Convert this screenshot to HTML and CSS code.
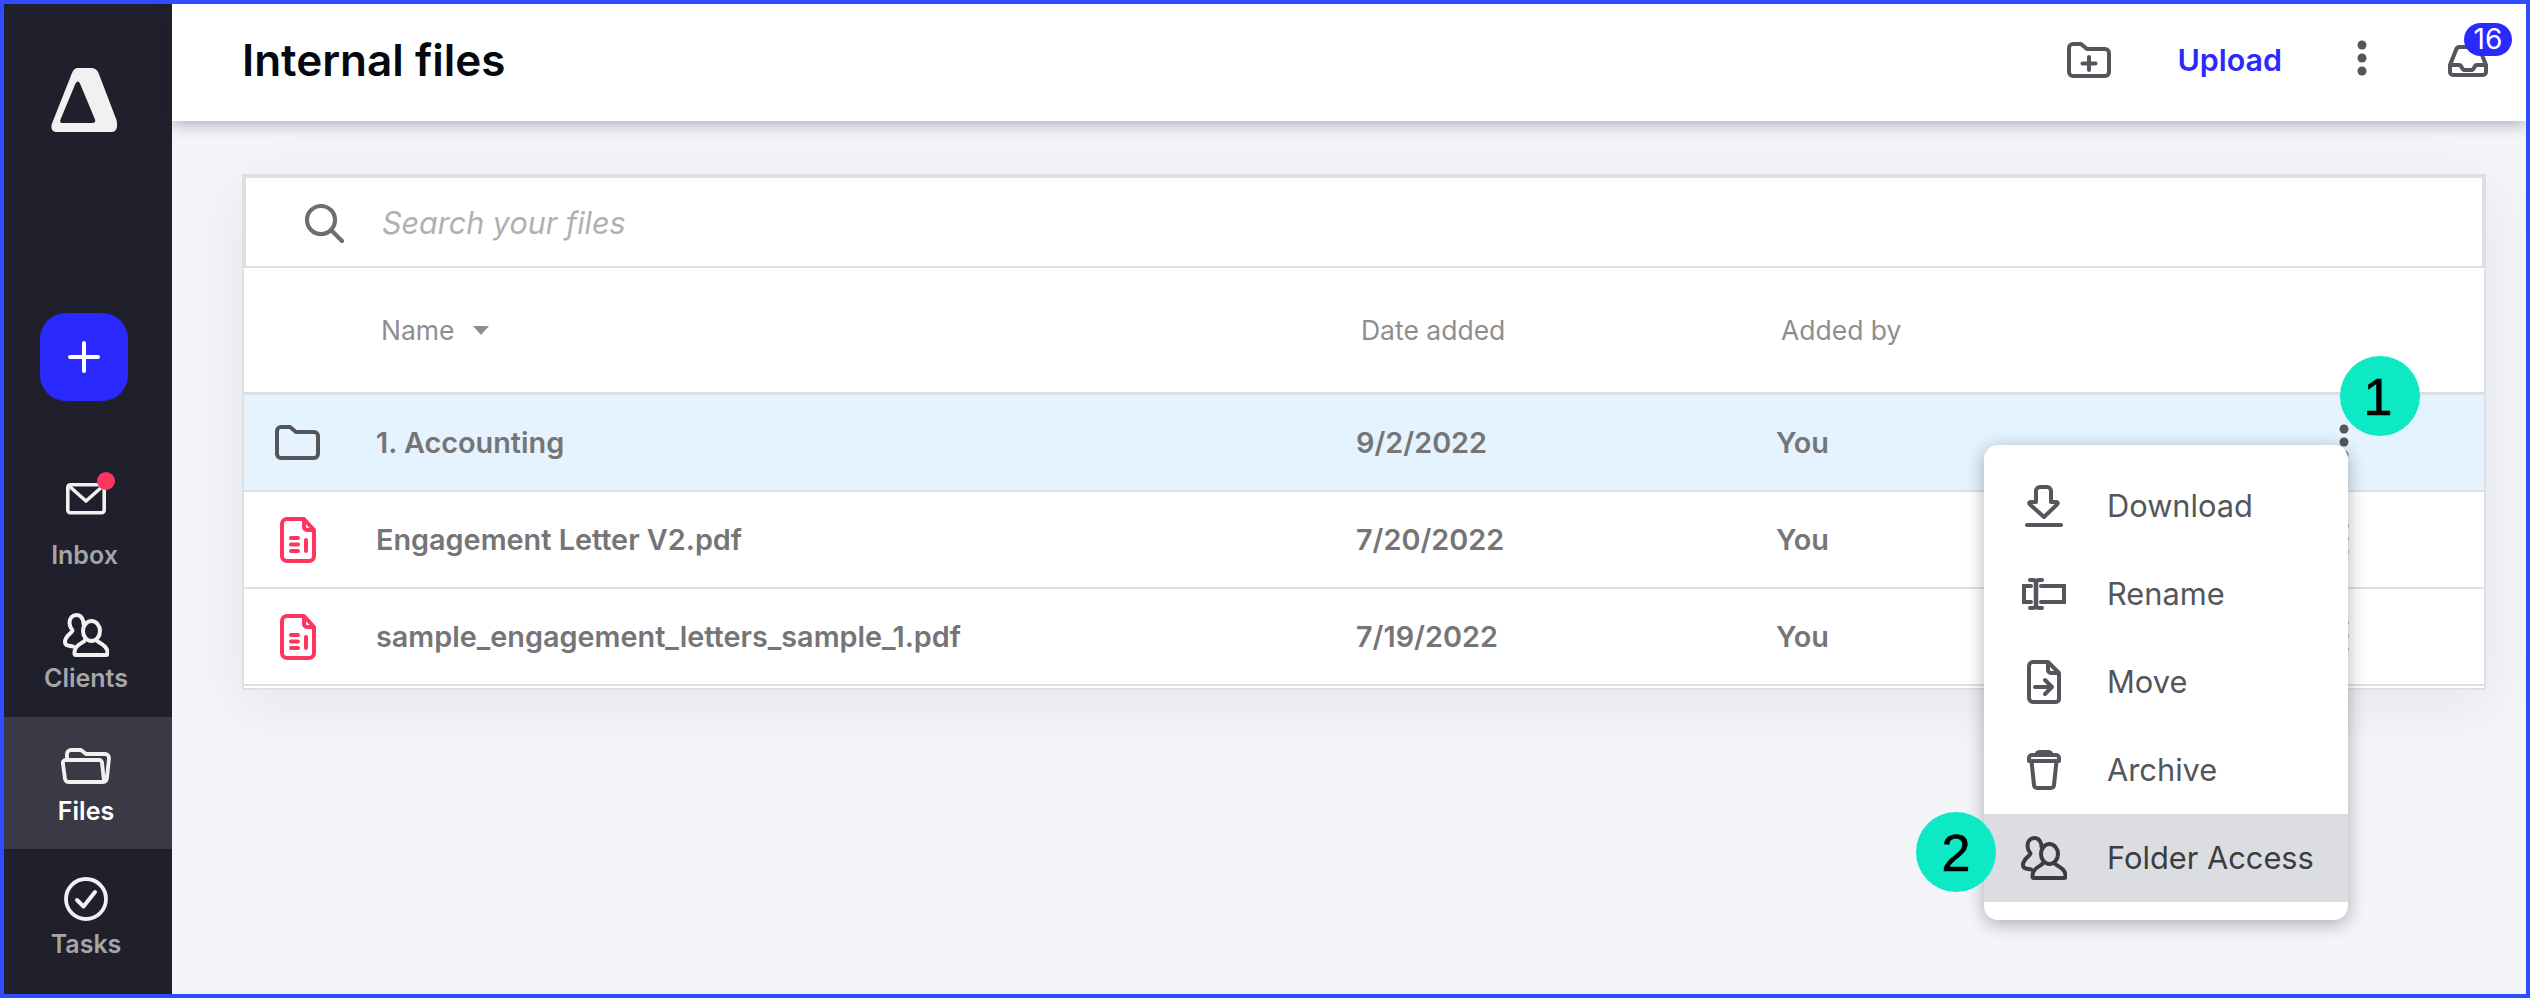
FILE: index.html
```html
<!DOCTYPE html>
<html lang="en">
<head>
<meta charset="utf-8">
<title>Internal files</title>
<link rel="stylesheet" href="styles.css">
</head>
<body>
<svg class="defs" width="0" height="0" aria-hidden="true">
  <symbol id="people" viewBox="0 0 46 44">
    <g fill="none" stroke="currentColor" stroke-width="4" stroke-linecap="round" stroke-linejoin="round">
      <ellipse cx="28.500" cy="18" rx="8.500" ry="10"/>
      <path d="M22 27c-1 3-10 4-10.500 12v1.500a1.500 1.500 0 0 0 1.500 1.500h30a1.500 1.500 0 0 0 1.500-1.500V39c-.5-8-9.500-9-11.500-12"/>
      <path d="M20.500 11c0-1 0-2-.3-3C19 4 16.500 2 13.500 2 9.500 2 6.500 5 6.500 10c0 3 1 5 3 7.500C8 21 2 23 2 29c0 2 1 3 3 3.500l5 1"/>
    </g>
  </symbol>
  <symbol id="kebab" viewBox="0 0 10 40">
    <circle cx="5" cy="5" r="4.500" fill="currentColor"/>
    <circle cx="5" cy="18" r="4.500" fill="currentColor"/>
    <circle cx="5" cy="31" r="4.500" fill="currentColor"/>
  </symbol>
  <symbol id="pdf" viewBox="0 0 36 46">
    <g fill="none" stroke="currentColor" stroke-width="4" stroke-linecap="round" stroke-linejoin="round">
      <path d="M7 2h17l10 11v26a5 5 0 0 1-5 5H7a5 5 0 0 1-5-5V7a5 5 0 0 1 5-5z"/>
      <path d="M24 3v7a3 3 0 0 0 3 3h6"/>
      <path d="M11 21h7M11 27.500h7M11 34h7M26 23v11" stroke-width="4"/>
    </g>
  </symbol>
</svg>

<div class="frame">
  <aside class="sidebar">
    <svg class="logo" viewBox="0 0 66 64" aria-hidden="true"><path fill-rule="evenodd" fill="#f1f1f1" d="M27 0H40Q45.500 0 47.500 5L65.500 52Q68 64 60 64H6Q-1 64 .8 56L21 5Q23 0 27 0ZM24.500 15.500L9.500 51.500Q8.300 55 11.500 55H41Q45 55 44 51.500L29 15.500Q27 11.500 24.500 15.500Z"/></svg>
    <div class="add-btn">
      <svg class="add-plus" viewBox="0 0 32 32" aria-hidden="true"><path d="M16 2v28M2 16h28" stroke="#fff" stroke-width="4" stroke-linecap="round"/></svg>
    </div>
    <nav class="nav">
      <div class="nav-item nav-inbox">
        <span class="nav-icon-wrap">
          <svg class="ic-mail" viewBox="0 0 40 32" aria-hidden="true"><g fill="none" stroke="#f1f1f1" stroke-width="3.600" stroke-linejoin="round" stroke-linecap="round"><rect x="1.800" y="1.800" width="36.400" height="28" rx="2.500"/><path d="M3 3l17 15L37 3"/></g></svg>
          <span class="dot"></span>
        </span>
        <span class="nav-label">Inbox</span>
      </div>
      <div class="nav-item nav-clients">
        <svg class="ic-people" aria-hidden="true"><use href="#people"/></svg>
        <span class="nav-label">Clients</span>
      </div>
      <div class="nav-item nav-files">
        <svg class="ic-files" viewBox="0 0 50 36" aria-hidden="true"><path fill="none" stroke="#f1f1f1" stroke-width="3.800" stroke-linecap="round" stroke-linejoin="round" d="M6 11V6a4 4 0 0 1 4-4h10l5 4h19a4 4 0 0 1 4 4l-2 20a4 4 0 0 1-4 4H8a4 4 0 0 1-4-3L2 16a3 3 0 0 1 3-4h33a3 3 0 0 1 3 3l2 18"/></svg>
        <span class="nav-label">Files</span>
      </div>
      <div class="nav-item nav-tasks">
        <svg class="ic-tasks" viewBox="0 0 44 44" aria-hidden="true"><g fill="none" stroke="#f1f1f1" stroke-linecap="round" stroke-linejoin="round"><circle cx="22" cy="22" r="20" stroke-width="3.800"/><path d="M13 23l6.500 6.500L31 15" stroke-width="4"/></g></svg>
        <span class="nav-label">Tasks</span>
      </div>
    </nav>
  </aside>

  <main class="main">
    <header class="topbar">
      <h1 class="title">Internal files</h1>
      <div class="actions">
        <svg class="ic-newfolder" viewBox="0 0 44 36" aria-hidden="true"><g fill="none" stroke="#53565b" stroke-width="4" stroke-linecap="round" stroke-linejoin="round"><path d="M2 6a4 4 0 0 1 4-4h8l6 5h18a4 4 0 0 1 4 4v19a4 4 0 0 1-4 4H6a4 4 0 0 1-4-4z"/><path d="M22 15v13M15.500 21.500h13"/></g></svg>
        <span class="upload">Upload</span>
        <svg class="ic-kebab-top" aria-hidden="true"><use href="#kebab"/></svg>
        <span class="inbox-wrap">
          <svg class="ic-tray" viewBox="0 0 40 32" aria-hidden="true"><path fill="none" stroke="#53565b" stroke-width="4" stroke-linejoin="round" d="M2 20L8 5a4 4 0 0 1 4-3h16a4 4 0 0 1 4 3l6 15v7a3 3 0 0 1-3 3H5a3 3 0 0 1-3-3zM2 20h9q2 0 3 3 1 2 3 2h6q2 0 3-2 1-3 3-3h9"/></svg>
          <span class="badge">16</span>
        </span>
      </div>
    </header>

    <section class="content">
      <div class="table">
        <div class="search">
          <svg class="ic-search" viewBox="0 0 40 40" aria-hidden="true"><g fill="none" stroke="#6e6e6e" stroke-width="4.200" stroke-linecap="round"><circle cx="17" cy="17" r="14"/><path d="M27 27l11 11"/></g></svg>
          <span class="placeholder">Search your files</span>
        </div>
        <div class="thead">
          <div class="th th-name">Name <span class="caret"></span></div>
          <div class="th th-date">Date added</div>
          <div class="th th-by">Added by</div>
        </div>
        <div class="row row-active">
          <div class="cell-icon"><svg class="ic-folder" viewBox="0 0 45 35" aria-hidden="true"><path fill="none" stroke="#53565b" stroke-width="4" stroke-linejoin="round" d="M2 6a4 4 0 0 1 4-4h9l6 5h18a4 4 0 0 1 4 4v18a4 4 0 0 1-4 4H6a4 4 0 0 1-4-4z"/></svg></div>
          <div class="cell-name">1. Accounting</div>
          <div class="cell-date">9/2/2022</div>
          <div class="cell-by">You</div>
          <svg class="ic-kebab-row" aria-hidden="true"><use href="#kebab"/></svg>
        </div>
        <div class="row">
          <div class="cell-icon"><svg class="ic-pdf" aria-hidden="true"><use href="#pdf"/></svg></div>
          <div class="cell-name">Engagement Letter V2.pdf</div>
          <div class="cell-date">7/20/2022</div>
          <div class="cell-by">You</div>
          <svg class="ic-kebab-row" aria-hidden="true"><use href="#kebab"/></svg>
        </div>
        <div class="row">
          <div class="cell-icon"><svg class="ic-pdf" aria-hidden="true"><use href="#pdf"/></svg></div>
          <div class="cell-name">sample_engagement_letters_sample_1.pdf</div>
          <div class="cell-date">7/19/2022</div>
          <div class="cell-by">You</div>
          <svg class="ic-kebab-row" aria-hidden="true"><use href="#kebab"/></svg>
        </div>

        <div class="menu">
          <div class="menu-item">
            <span class="menu-icon"><svg class="ic-download" viewBox="0 0 38 42" aria-hidden="true"><g fill="none" stroke="currentColor" stroke-width="4" stroke-linecap="round" stroke-linejoin="round"><path d="M11 17V6a4 4 0 0 1 4-4h7a4 4 0 0 1 4 4v11h5q3 0 1 2.500L19 32 5 19.500Q3 17 6 17z"/><path d="M2 40h34" stroke-width="4"/></g></svg></span>
            <span class="menu-text">Download</span>
          </div>
          <div class="menu-item">
            <span class="menu-icon"><svg class="ic-rename" viewBox="0 0 44 32" aria-hidden="true"><g fill="none" stroke="currentColor" stroke-width="4" stroke-linecap="round" stroke-linejoin="miter"><path d="M9 8H2v16h7M19 8h23v16H19"/><path d="M14 3v26" stroke-width="4.500"/><path d="M8 2h2q4 0 4 2 0-2 4-2h2M8 30h2q4 0 4-2 0 2 4 2h2"/></g></svg></span>
            <span class="menu-text">Rename</span>
          </div>
          <div class="menu-item">
            <span class="menu-icon"><svg class="ic-move" viewBox="0 0 34 44" aria-hidden="true"><g fill="none" stroke="currentColor" stroke-width="4" stroke-linecap="round" stroke-linejoin="round"><path d="M6 2h15l11 11v26a3 3 0 0 1-3 3H6a4 4 0 0 1-4-4V6a4 4 0 0 1 4-4z"/><path d="M21 3v7a3 3 0 0 0 3 3h7"/><path d="M8 27h16M18 20l7 7-7 7"/></g></svg></span>
            <span class="menu-text">Move</span>
          </div>
          <div class="menu-item">
            <span class="menu-icon"><svg class="ic-archive" viewBox="0 0 34 40" aria-hidden="true"><g fill="none" stroke="currentColor" stroke-width="4" stroke-linecap="round" stroke-linejoin="round"><path d="M2 8a3 3 0 0 1 3-3h24a3 3 0 0 1 3 3v3H2z"/><path d="M10 4q0-2 3-2h8q3 0 3 2"/><path d="M4.500 11L7 35a3 3 0 0 0 3 3h14a3 3 0 0 0 3-3l2.500-24"/></g></svg></span>
            <span class="menu-text">Archive</span>
          </div>
          <div class="menu-item menu-item-active">
            <span class="menu-icon"><svg class="ic-people-menu" aria-hidden="true"><use href="#people"/></svg></span>
            <span class="menu-text">Folder Access</span>
          </div>
        </div>

        <span class="callout callout-1">1</span>
        <span class="callout callout-2">2</span>
      </div>
    </section>
  </main>
</div>
</body>
</html>
```

FILE: styles.css
```css
* { box-sizing: border-box; }

html, body {
  margin: 0;
  padding: 0;
  width: 2530px;
  height: 998px;
  overflow: hidden;
  font-family: Inter, "Liberation Sans", sans-serif;
}

.defs { display: block; width: 0; height: 0; }

.frame {
  width: 2530px;
  height: 998px;
  border: 4px solid #2f4dff;
  display: flex;
  overflow: hidden;
  background: #f3f5f9;
}

/* Sidebar */
.sidebar {
  flex: 0 0 168px;
  background: #201f2c;
  display: flex;
  flex-direction: column;
  align-items: center;
}

.logo {
  width: 66px;
  height: 64px;
  margin-top: 64px;
  margin-left: -8px;
  display: block;
}

.add-btn {
  width: 88px;
  height: 88px;
  margin-top: 181px;
  margin-left: -8px;
  border-radius: 26px;
  background: #2a2aff;
  display: flex;
  align-items: center;
  justify-content: center;
}

.add-plus { width: 32px; height: 32px; display: block; }

.nav {
  width: 100%;
  display: flex;
  flex-direction: column;
}

.nav-item {
  display: flex;
  flex-direction: column;
  align-items: center;
  padding-right: 4px;
}

.nav-label {
  font-size: 25px;
  font-weight: 600;
  line-height: 30px;
  color: #a6a6a9;
}

.nav-inbox { padding-top: 82px; height: 208px; }
.nav-inbox .nav-label { margin-top: 25px; margin-left: -3px; }
.nav-icon-wrap { position: relative; display: block; width: 40px; height: 32px; }
.ic-mail { width: 40px; height: 32px; display: block; }
.dot {
  position: absolute;
  top: -11px;
  right: -9px;
  width: 18px;
  height: 18px;
  border-radius: 50%;
  background: #ff3560;
}

.nav-clients { height: 108px; padding-top: 4px; }
.ic-people { width: 46px; height: 44px; display: block; color: #f1f1f1; }
.nav-clients .nav-label { margin-top: 6px; }

.nav-files {
  height: 132px;
  padding-top: 31px;
  background: #3a3945;
}
.ic-files { width: 50px; height: 36px; display: block; }
.nav-files .nav-label { color: #fff; margin-top: 12px; }

.nav-tasks { padding-top: 28px; }
.ic-tasks { width: 44px; height: 44px; display: block; }
.nav-tasks .nav-label { margin-top: 8px; }

/* Main */
.main {
  flex: 1 1 auto;
  min-width: 0;
  display: flex;
  flex-direction: column;
}

.topbar {
  flex: 0 0 117px;
  background: #fff;
  box-shadow: 0 4px 14px rgba(30, 30, 50, .3);
  display: flex;
  align-items: center;
  justify-content: space-between;
  padding: 0 38px 5px 70px;
  position: relative;
  z-index: 2;
}

.title {
  margin: 0;
  font-size: 44px;
  font-weight: 600;
  color: #05090f;
}

.actions { display: flex; align-items: center; }
.ic-newfolder { width: 44px; height: 36px; display: block; }
.upload {
  margin-left: 67px;
  font-size: 30.400px;
  font-weight: 600;
  color: #2a2aff;
}
.ic-kebab-top { width: 10px; height: 40px; display: block; margin-left: 75px; color: #53565b; }
.inbox-wrap { position: relative; display: block; width: 40px; height: 32px; margin-left: 81px; margin-top: 1px; }
.ic-tray { width: 40px; height: 32px; display: block; }
.badge {
  position: absolute;
  left: 16px;
  top: -22px;
  width: 48px;
  height: 33px;
  border-radius: 17px;
  background: #2a2aff;
  color: #fff;
  font-size: 28px;
  line-height: 33px;
  text-align: center;
}

.content {
  flex: 1 1 auto;
  padding: 53px 40px 0 70px;
}

.table {
  position: relative;
  background: #fff;
  border: 2px solid #dedfe0;
  height: 516px;
  box-shadow: 0 14px 60px rgba(30, 30, 50, .07);
}

.search {
  height: 90px;
  border: 2px solid #dedfe0;
  border-bottom: 0;
  display: flex;
  align-items: center;
  padding-left: 58px;
}
.ic-search { width: 40px; height: 40px; display: block; margin-top: 1px; }
.placeholder {
  margin-left: 38px;
  font-size: 30.500px;
  font-style: italic;
  color: #b0b0b3;
}

.thead {
  height: 129px;
  border-top: 2px solid #dedfe0;
  border-bottom: 3px solid #dedfe0;
  display: flex;
  align-items: center;
  color: #8e8e90;
  font-size: 26.500px;
}

.th { flex: none; }
.th-name { width: 980px; margin-left: 137px; display: flex; align-items: center; }
.th-date { width: 420px; }
.caret {
  width: 0;
  height: 0;
  margin-left: 18px;
  border-left: 8px solid transparent;
  border-right: 8px solid transparent;
  border-top: 9px solid #8e8e90;
}

.row {
  height: 97px;
  border-bottom: 2px solid #dedfe0;
  display: flex;
  align-items: center;
  position: relative;
  font-size: 28.800px;
  font-weight: 600;
  color: #757578;
}
.row-active { background: #e4f3fd; }

.cell-icon { width: 132px; display: flex; justify-content: flex-start; padding-left: 36px; }
.cell-name { width: 980px; }
.cell-date { width: 420px; }
.ic-folder { width: 45px; height: 35px; display: block; margin-left: -5px; }
.ic-pdf { width: 36px; height: 46px; display: block; color: #ff3560; }
.ic-kebab-row {
  position: absolute;
  left: 2095px;
  top: 29px;
  width: 10px;
  height: 40px;
  color: #53565b;
}

.menu {
  position: absolute;
  top: 269px;
  left: 1740px;
  width: 364px;
  height: 475px;
  padding-top: 17px;
  background: #fff;
  border-radius: 14px;
  box-shadow: 0 4px 18px rgba(20, 20, 30, .32);
  z-index: 3;
}

.menu-item {
  height: 88px;
  display: flex;
  align-items: center;
  color: #53565b;
}
.menu-item-active { background: #dcdde0; color: #3b3d40; }
.menu-icon { width: 123px; display: flex; justify-content: center; padding-right: 4px; }
.menu-text { font-size: 30.800px; line-height: 40px; margin-top: -1px; }

.ic-download { width: 38px; height: 42px; display: block; }
.ic-rename { width: 44px; height: 32px; display: block; }
.ic-move { width: 34px; height: 44px; display: block; }
.ic-archive { width: 34px; height: 40px; display: block; }
.ic-people-menu { width: 46px; height: 44px; display: block; }

.callout {
  position: absolute;
  width: 80px;
  height: 80px;
  border-radius: 50%;
  background: #0de8c5;
  color: #000;
  font-family: "Liberation Sans", sans-serif;
  font-size: 52px;
  line-height: 83px;
  text-align: center;
  -webkit-text-stroke: .6px #000;
  z-index: 4;
}
.callout-1 { left: 2096px; top: 180px; text-indent: -4px; }
.callout-2 { left: 1672px; top: 636px; }
```
